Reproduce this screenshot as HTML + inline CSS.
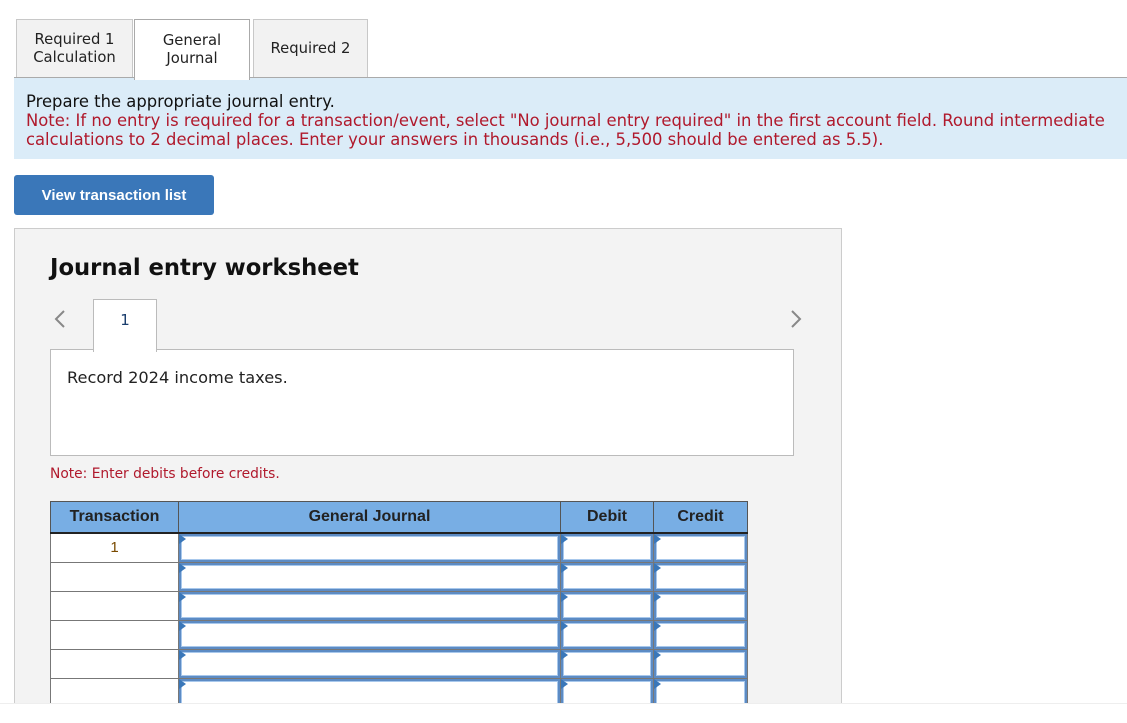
<!DOCTYPE html>
<html><head><style>
body{margin:0;width:1127px;height:723px;overflow:hidden;background:#fff;font-family:Verdana,"DejaVu Sans",sans-serif;position:relative}
.a{position:absolute}
.tab{position:absolute;top:19px;height:57px;background:#f2f2f2;border:1px solid #c8c8c8;border-bottom:none;font-size:14.8px;color:#222;display:flex;align-items:center;justify-content:center;text-align:center;line-height:18px}
table{border-collapse:collapse;font-family:"Liberation Sans",Arial,sans-serif}
td,th{padding:0}
</style></head><body>
<div class="tab" style="left:16px;width:115px">Required 1<br>Calculation</div>
<div class="tab" style="left:134px;width:114px;background:#fff;border-color:#aaa;height:60px;z-index:2">General<br>Journal</div>
<div class="tab" style="left:253px;width:113px">Required 2</div>
<div class="a" style="left:14px;top:77px;width:1113px;height:82px;background:#dbecf8;border-top:1px solid #aaa;box-sizing:border-box;padding:14px 12px;font-size:16.4px;line-height:19px;color:#111">Prepare the appropriate journal entry.<br><span style="color:#b0192c">Note: If no entry is required for a transaction/event, select "No journal entry required" in the first account field. Round intermediate calculations to 2 decimal places. Enter your answers in thousands (i.e., 5,500 should be entered as 5.5).</span></div>
<div class="a" style="left:14px;top:175px;width:200px;height:40px;background:#3a77b9;border-radius:3px;color:#fff;font:bold 15px 'Liberation Sans',Arial,sans-serif;display:flex;align-items:center;justify-content:center">View transaction list</div>
<div class="a" style="left:14px;top:228px;width:828px;height:480px;background:#f3f3f3;border:1px solid #ccc;box-sizing:border-box">
<div class="a" style="left:35px;top:26px;font:bold 22.7px Verdana,'DejaVu Sans',sans-serif;color:#111">Journal entry worksheet</div>
<svg class="a" style="left:38px;top:80px" width="14" height="20"><path d="M11 2 L3 10 L11 18" fill="none" stroke="#888" stroke-width="2"/></svg>
<svg class="a" style="left:774px;top:80px" width="14" height="20"><path d="M3 2 L11 10 L3 18" fill="none" stroke="#888" stroke-width="2"/></svg>
<div class="a" style="left:78px;top:70px;width:62px;height:52px;background:#fff;border:1px solid #bbb;border-bottom:none;z-index:2;text-align:center;font-size:15px;line-height:40px;color:#1a3d6d">1</div>
<div class="a" style="left:35px;top:120px;width:744px;height:107px;background:#fff;border:1px solid #bbb;box-sizing:border-box;padding:18px 16px;font-size:16.2px;color:#222">Record 2024 income taxes.</div>
<div class="a" style="left:35px;top:237px;font-size:13.8px;color:#b0192c">Note: Enter debits before credits.</div>
<table class="a" style="left:35px;top:272px">
<tr style="height:31px;background:#78aee4;font-weight:bold;font-size:16px;color:#222">
<th style="width:127px;border:1px solid #555;border-bottom:2px solid #222">Transaction</th>
<th style="width:381px;border:1px solid #555;border-bottom:2px solid #222">General Journal</th>
<th style="width:92px;border:1px solid #555;border-bottom:2px solid #222">Debit</th>
<th style="width:93px;border:1px solid #555;border-bottom:2px solid #222">Credit</th></tr>
</table>
</div>
<div class="a" style="left:0;top:703px;width:1127px;height:20px;background:#fff;border-top:1px solid #eee;box-sizing:border-box"></div>
<script>
var t=document.querySelector('table');
var tri='<svg style="position:absolute;left:0;top:0" width="8" height="10"><path d="M0 0 L7 5 L0 10Z" fill="#3a77b9"/></svg>';
var c=function(){return '<td style="border:1px solid #777;background:#5c8bc4;padding:2px;position:relative"><div style="height:24px;background:#fff;border:1px solid #a8c8ec;box-sizing:border-box"></div>'+tri+'</td>';};
for(var i=0;i<6;i++){var tr=document.createElement('tr');tr.style.height='29px';tr.innerHTML='<td style="border:1px solid #777;background:#fff;text-align:center;font-size:15px;color:#7a4a00">'+(i==0?'1':'')+'</td>'+c()+c()+c();t.appendChild(tr);}
</script>
</body></html>
